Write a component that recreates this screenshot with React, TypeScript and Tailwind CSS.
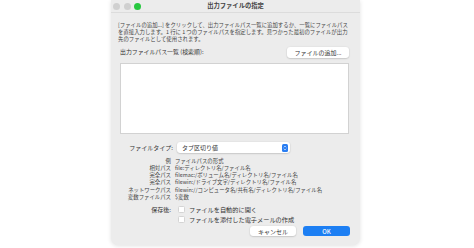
import * as React from 'react';

const font = { fontFamily: '"Noto Sans CJK JP", "Noto Sans", sans-serif' };

const examples: [string, string][] = [
  ['例', 'ファイルパスの形式'],
  ['相対パス', 'file:ディレクトリ名/ファイル名'],
  ['完全パス', 'filemac:/ボリューム名/ディレクトリ名/ファイル名'],
  ['完全パス', 'filewin:/ドライブ文字/ディレクトリ名/ファイル名'],
  ['ネットワークパス', 'filewin://コンピュータ名/共有名/ディレクトリ名/ファイル名'],
  ['変数ファイルパス', '$変数'],
];

const Checkbox = ({ label }: { label: string }) => (
  <div className="flex items-center gap-[4px] h-[10px]">
    <div className="w-[7px] h-[7px] rounded-[1.5px] bg-white border border-[#d4d4d4]" />
    <span className="text-[6.2px] text-[#333]">{label}</span>
  </div>
);

export default function App() {
  return (
    <div className="w-[474px] h-[248px] bg-white flex" style={font}>
      <div className="ml-[111px] w-[249px] h-[245px] bg-[#ececec] rounded-b-[7px] shadow-[0_1px_4px_rgba(0,0,0,0.12)] flex flex-col">
        {/* Title bar */}
        <div className="relative h-[13px] flex items-center justify-center border-b border-[#dcdcdc]">
          <div className="absolute left-[2px] top-[3px] flex gap-[3.5px]">
            <div className="w-[7px] h-[7px] rounded-full bg-[#d0d0d0]" />
            <div className="w-[7px] h-[7px] rounded-full bg-[#d0d0d0]" />
            <div className="w-[7px] h-[7px] rounded-full bg-[#28c840]" />
          </div>
          <span className="text-[6.3px] font-bold text-[#444]">出力ファイルの指定</span>
        </div>

        {/* Description */}
        <div className="pl-[7px] pt-[9px] text-[5.4px] leading-[7.1px] text-[#444] whitespace-nowrap">
          <div>[ファイルの追加...] をクリックして、出力ファイルパス一覧に追加するか、一覧にファイルパス</div>
          <div>を直接入力します。1 行に 1 つのファイルパスを指定します。見つかった最初のファイルが出力</div>
          <div>先のファイルとして使用されます。</div>
        </div>

        {/* List header */}
        <div className="mt-[3px] pl-[9px] pr-[11px] h-[12px] flex items-center justify-between">
          <span className="text-[5.9px] text-[#333]">出力ファイルパス一覧 (検索順):</span>
          <div className="w-[62px] h-[11px] rounded-[3px] bg-white shadow-[0_0.5px_1.5px_rgba(0,0,0,0.25)] flex items-center justify-center text-[6px] text-[#333]">
            ファイルの追加...
          </div>
        </div>

        {/* List */}
        <div className="mt-[5px] ml-[9px] mr-[11px] h-[71px] bg-white border border-[#d2d2d2]" />

        {/* File type */}
        <div className="mt-[8px] flex items-center h-[11px]">
          <div className="w-[62px] text-right text-[6px] text-[#333]">ファイルタイプ:</div>
          <div className="ml-[4px] w-[113px] h-[11px] rounded-[3px] bg-white shadow-[0_0.5px_1.5px_rgba(0,0,0,0.25)] flex items-center justify-between pl-[5px] pr-[2px]">
            <span className="text-[6px] text-[#333]">タブ区切り値</span>
            <div className="w-[6px] h-[8px] rounded-[1.5px] bg-[#2a7ef2] flex items-center justify-center">
              <svg width="4" height="6" viewBox="0 0 4 6">
                <path d="M0.8 2.3 L2 1.1 L3.2 2.3 M0.8 3.7 L2 4.9 L3.2 3.7" stroke="white" strokeWidth="0.7" fill="none" />
              </svg>
            </div>
          </div>
        </div>

        {/* Examples */}
        <div className="mt-[4px] flex flex-col">
          {examples.map(([k, v], i) => (
            <div key={i} className="flex items-center h-[7.2px]">
              <div className="w-[60px] text-right text-[5.4px] text-[#444] whitespace-nowrap">{k}</div>
              <div className="ml-[4px] text-[5.4px] text-[#444] whitespace-nowrap">{v}</div>
            </div>
          ))}
        </div>

        {/* After save */}
        <div className="mt-[4px] flex">
          <div className="w-[60px] text-right text-[6px] text-[#333] h-[10px] flex items-center justify-end">保存後:</div>
          <div className="ml-[7px] flex flex-col">
            <Checkbox label="ファイルを自動的に開く" />
            <Checkbox label="ファイルを添付した電子メールの作成" />
          </div>
        </div>

        {/* Buttons */}
        <div className="mt-[2px] pr-[10px] flex justify-end gap-[7px]">
          <div className="w-[46px] h-[10px] rounded-[3px] bg-white shadow-[0_0.5px_1.5px_rgba(0,0,0,0.25)] flex items-center justify-center text-[6px] text-[#333]">
            キャンセル
          </div>
          <div className="w-[47px] h-[10px] rounded-[3px] bg-[#1d7ff3] flex items-center justify-center text-[6px] font-medium text-white">
            OK
          </div>
        </div>
      </div>
    </div>
  );
}
